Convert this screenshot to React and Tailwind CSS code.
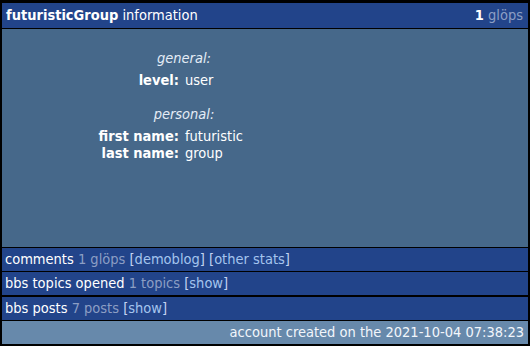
const font = { fontFamily: '"DejaVu Sans Condensed", "Noto Sans", sans-serif' };

function Info({ label, value }) {
    return (
        <div className="flex items-baseline h-[17px]">
            <span className="w-[82px] text-right font-bold text-white">{label}</span>
            <span className="ml-[6px] text-white">{value}</span>
        </div>
    );
}

function Heading({ children }) {
    return <div className="w-[174px] text-center italic text-[#e4ecf6] h-[17px] mb-[5px]">{children}</div>;
}

function Link({ children }) {
    return (
        <span className="text-[#c4d4f2]">
            [<span className="text-[#a4c4ee]">{children}</span>]
        </span>
    );
}

function StatRow({ className = "mt-px", children }) {
    return (
        <div className={`h-[23px] bg-[#22448a] flex items-center pl-[3px] whitespace-nowrap ${className}`}>
            {children}
        </div>
    );
}

export default function App() {
    return (
        <div style={font} className="w-[530px] h-[346px] bg-black flex flex-col pt-[3px] px-[2px] pb-[2px] text-[14.5px] leading-[17px] text-white">
            <div className="h-[25px] bg-[#22448a] flex items-center justify-between pl-[4px] pr-[5px]">
                <div><span className="font-bold">futuristicGroup</span> information</div>
                <div><span className="font-bold">1</span> <span className="text-[#8c9ec4]">glöps</span></div>
            </div>

            <div className="mt-px flex-1 bg-[#46688a] pt-[21px] pl-[95px]">
                <Heading>general:</Heading>
                <Info label="level:" value="user" />
                <div className="mt-[17px]">
                    <Heading>personal:</Heading>
                    <Info label="first name:" value="futuristic" />
                    <Info label="last name:" value="group" />
                </div>
            </div>

            <StatRow>
                comments&nbsp;<span className="text-[#8c9ec4]">1 glöps</span>&nbsp;<Link>demoblog</Link>&nbsp;<Link>other stats</Link>
            </StatRow>
            <StatRow>
                bbs topics opened&nbsp;<span className="text-[#8c9ec4]">1 topics</span>&nbsp;<Link>show</Link>
            </StatRow>
            <StatRow className="mt-[2px]">
                bbs posts&nbsp;<span className="text-[#8c9ec4]">7 posts</span>&nbsp;<Link>show</Link>
            </StatRow>
            <div className="mt-px h-[23px] bg-[#6789ab] flex items-center justify-end pr-[4px] text-[#f2f6fb]">
                account created on the 2021-10-04 07:38:23
            </div>
        </div>
    );
}
